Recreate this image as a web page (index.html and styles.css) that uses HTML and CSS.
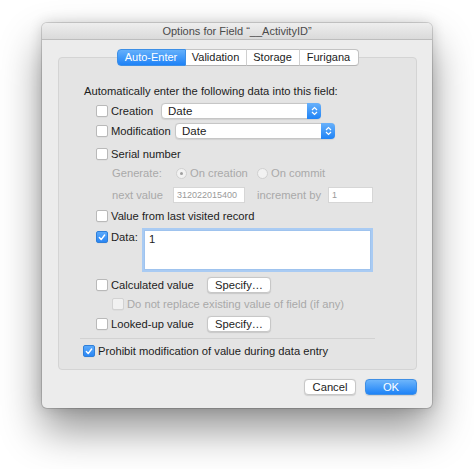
FILE: index.html
```html
<!DOCTYPE html>
<html>
<head>
<meta charset="utf-8">
<link rel="stylesheet" href="styles.css">
</head>
<body>
<div class="stage">
  <div class="window">
    <div class="titlebar">Options for Field “__ActivityID”</div>
    <div class="body">
      <div class="box">
        <div class="tabs">
          <div class="tab sel w1">Auto-Enter</div>
          <div class="tab w2">Validation</div>
          <div class="tab w3">Storage</div>
          <div class="tab w4">Furigana</div>
        </div>
        <div class="form">
          <div class="row r-head">Automatically enter the following data into this field:</div>

          <div class="row r-creation ind1">
            <span class="cb"></span><span class="lbl lw-creation">Creation</span>
            <div class="popup"><span class="ptext">Date</span><span class="pcap"><svg width="7" height="10" viewBox="0 0 7 10"><path d="M1 4 L3.5 1.5 L6 4 M1 6 L3.5 8.5 L6 6" fill="none" stroke="#fff" stroke-width="1.2"/></svg></span></div>
          </div>

          <div class="row r-mod ind1">
            <span class="cb"></span><span class="lbl lw-mod">Modification</span>
            <div class="popup"><span class="ptext">Date</span><span class="pcap"><svg width="7" height="10" viewBox="0 0 7 10"><path d="M1 4 L3.5 1.5 L6 4 M1 6 L3.5 8.5 L6 6" fill="none" stroke="#fff" stroke-width="1.2"/></svg></span></div>
          </div>

          <div class="row r-serial ind1">
            <span class="cb"></span><span class="lbl">Serial number</span>
          </div>

          <div class="row r-gen ind2 dis">
            <span class="lw-gen">Generate:</span>
            <span class="opt1"><span class="radio on"></span>On creation</span>
            <span class="opt2"><span class="radio"></span>On commit</span>
          </div>

          <div class="row r-next ind2 dis">
            <span class="lw-next">next value</span>
            <span class="field f1">312022015400</span>
            <span class="lw-inc">increment by</span>
            <span class="field f2">1</span>
          </div>

          <div class="row r-last ind1">
            <span class="cb"></span><span class="lbl">Value from last visited record</span>
          </div>

          <div class="row r-data ind1">
            <div class="data-lead"><span class="cb checked"><svg width="11" height="11" viewBox="0 0 11 11"><path d="M2.6 5.6 L4.6 7.8 L8.4 2.8" fill="none" stroke="#fff" stroke-width="1.6" stroke-linecap="round" stroke-linejoin="round"/></svg></span><span class="lbl lw-data">Data:</span></div>
            <div class="textarea">1</div>
          </div>

          <div class="row r-calc ind1">
            <span class="cb"></span><span class="lbl lw-calc">Calculated value</span>
            <span class="btn spec">Specify…</span>
          </div>

          <div class="row r-dnr ind2 dis">
            <span class="cb dcb"></span><span class="lbl">Do not replace existing value of field (if any)</span>
          </div>

          <div class="row r-look ind1">
            <span class="cb"></span><span class="lbl lw-calc">Looked-up value</span>
            <span class="btn spec">Specify…</span>
          </div>

          <div class="sep"></div>

          <div class="row r-prohibit">
            <span class="cb checked"><svg width="11" height="11" viewBox="0 0 11 11"><path d="M2.6 5.6 L4.6 7.8 L8.4 2.8" fill="none" stroke="#fff" stroke-width="1.6" stroke-linecap="round" stroke-linejoin="round"/></svg></span><span class="lbl">Prohibit modification of value during data entry</span>
          </div>
        </div>
      </div>
      <div class="actions">
        <span class="btn cancel">Cancel</span>
        <span class="btn ok">OK</span>
      </div>
    </div>
  </div>
</div>
</body>
</html>
```

FILE: styles.css
```css
html, body {
  margin: 0;
  background: #ffffff;
}
body {
  font-family: "Liberation Sans", Arial, Helvetica, sans-serif;
  font-size: 11.2px;
  color: #1c1c1c;
}
.stage {
  padding: 23px 0 0 42px;
  min-height: 469px;
  box-sizing: border-box;
}
.window {
  width: 390px;
  height: 385px;
  box-sizing: border-box;
  background: #ececec;
  border-radius: 5px;
  box-shadow: 0 0 0 1px rgba(0,0,0,0.14), 0 22px 42px rgba(0,0,0,0.42), 0 0 14px rgba(0,0,0,0.16);
  display: flex;
  flex-direction: column;
}
.titlebar {
  height: 16px;
  line-height: 17px;
  border-bottom: 1px solid #bdbdbd;
  border-radius: 5px 5px 0 0;
  background: linear-gradient(#eeeeee, #dadada);
  text-align: center;
  color: #4a4a4a;
  font-size: 11px;
}
.body {
  padding: 17px 15px 0 16px;
  display: flex;
  flex-direction: column;
}
.box {
  height: 313px;
  box-sizing: border-box;
  border: 1px solid #d4d4d4;
  border-radius: 4px;
  background: #e4e4e4;
}
.tabs {
  display: flex;
  justify-content: center;
  margin-top: -9px;
}
.tab {
  height: 15px;
  line-height: 15px;
  text-align: center;
  background: #ffffff;
  border-top: 1px solid #c3c3c3;
  border-bottom: 1px solid #b3b3b3;
  border-right: 1px solid #d0d0d0;
  color: #1c1c1c;
  font-size: 11px;
}
.tab:first-child {
  border-radius: 4px 0 0 4px;
  border-left: 1px solid #c3c3c3;
}
.tab:last-child {
  border-radius: 0 4px 4px 0;
  border-right: 1px solid #c3c3c3;
}
.tab.sel {
  background: linear-gradient(#64b0fb, #1e82f7);
  border-color: #3d8fe6;
  color: #ffffff;
}
.w1 { width: 67px; }
.w2 { width: 60px; }
.w3 { width: 52px; }
.w4 { width: 58px; }

.form {
  padding-left: 25px;
  display: flex;
  flex-direction: column;
}
.row {
  display: flex;
  align-items: center;
  height: 14px;
  white-space: nowrap;
}
.ind1 { padding-left: 12px; }
.ind2 { padding-left: 28px; }
.dis { color: #a9a9a9; }

.r-head { margin-top: 18px; }
.r-creation { margin-top: 5px; height: 16px; }
.r-mod { margin-top: 4px; height: 16px; }
.r-serial { margin-top: 8px; }
.r-gen { margin-top: 5px; }
.r-next { margin-top: 7px; height: 16px; }
.r-last { margin-top: 6px; }
.r-data { margin-top: 5px; height: 43px; align-items: flex-start; }
.r-calc { margin-top: 6px; height: 16px; }
.r-dnr { margin-top: 4px; }
.r-look { margin-top: 5px; height: 16px; }
.r-prohibit { margin-top: 5px; margin-left: -1px; }

.cb {
  width: 10px;
  height: 10px;
  flex: none;
  border: 1px solid #b9b9b9;
  border-radius: 2px;
  background: #ffffff;
  box-shadow: 0 0.5px 0 rgba(0,0,0,0.06);
  display: flex;
  align-items: center;
  justify-content: center;
}
.cb svg { display: block; }
.cb.checked {
  background: linear-gradient(#5aa9fb, #2a86f4);
  border-color: #2f7fd9;
}
.cb.dcb {
  background: #f1f1f1;
  border-color: #d2d2d2;
}
.lbl { padding-left: 3px; }
.lw-creation { width: 50px; }
.lw-mod { width: 64px; }
.lw-calc { width: 96px; }
.lw-data { width: 31px; }

.popup {
  width: 158px;
  height: 14px;
  border: 1px solid #c6c6c6;
  border-radius: 4px;
  background: #ffffff;
  display: flex;
  align-items: center;
  box-shadow: 0 0.5px 1px rgba(0,0,0,0.08);
}
.ptext {
  flex: 1;
  padding-left: 6px;
  font-size: 11.5px;
}
.pcap {
  width: 14px;
  height: 16px;
  margin: -1px -1px -1px 0;
  border-radius: 0 4px 4px 0;
  background: linear-gradient(#68b1fb, #1f83f6);
  display: flex;
  align-items: center;
  justify-content: center;
}
.pcap svg { display: block; }

.lw-gen { width: 64px; }
.opt1 { width: 81px; display: flex; align-items: center; }
.opt2 { display: flex; align-items: center; }
.radio {
  width: 9px;
  height: 9px;
  border: 1px solid #d0d0d0;
  border-radius: 50%;
  background: #f2f2f2;
  margin-right: 3px;
  display: flex;
  align-items: center;
  justify-content: center;
}
.radio.on::after {
  content: "";
  width: 3px;
  height: 3px;
  border-radius: 50%;
  background: #a0a0a0;
}

.lw-next { width: 61px; }
.field {
  height: 14px;
  line-height: 14px;
  border: 1px solid #d6d6d6;
  background: #ffffff;
  font-size: 9px;
  color: #9a9a9a;
  padding-left: 3px;
  box-sizing: content-box;
}
.f1 { width: 67px; }
.lw-inc { margin-left: 12px; width: 71px; }
.f2 { width: 40px; }

.data-lead {
  display: flex;
  align-items: center;
  height: 14px;
  margin-top: 2px;
}
.textarea {
  width: 221px;
  height: 37px;
  border: 1px solid #9fc3ee;
  box-shadow: 0 0 0 2px #a9cbf3;
  margin: 2px 0 0 2px;
  background: #ffffff;
  padding-left: 4px;
  line-height: 14px;
  padding-top: 1px;
  box-sizing: content-box;
}

.btn {
  display: flex;
  align-items: center;
  justify-content: center;
  height: 14px;
  border: 1px solid #c7c7c7;
  border-radius: 4px;
  background: #ffffff;
  box-shadow: 0 0.5px 1px rgba(0,0,0,0.12);
}
.spec { width: 62px; }

.sep {
  height: 1px;
  background: #d2d2d2;
  margin: 6px 0 0 -4px;
  width: 295px;
}

.actions {
  display: flex;
  justify-content: flex-end;
  margin-top: 9px;
}
.cancel { width: 50px; }
.ok {
  width: 50px;
  margin-left: 9px;
  background: linear-gradient(#6db5fb, #1e83f7);
  border-color: #3f8fe5;
  color: #ffffff;
}
```
